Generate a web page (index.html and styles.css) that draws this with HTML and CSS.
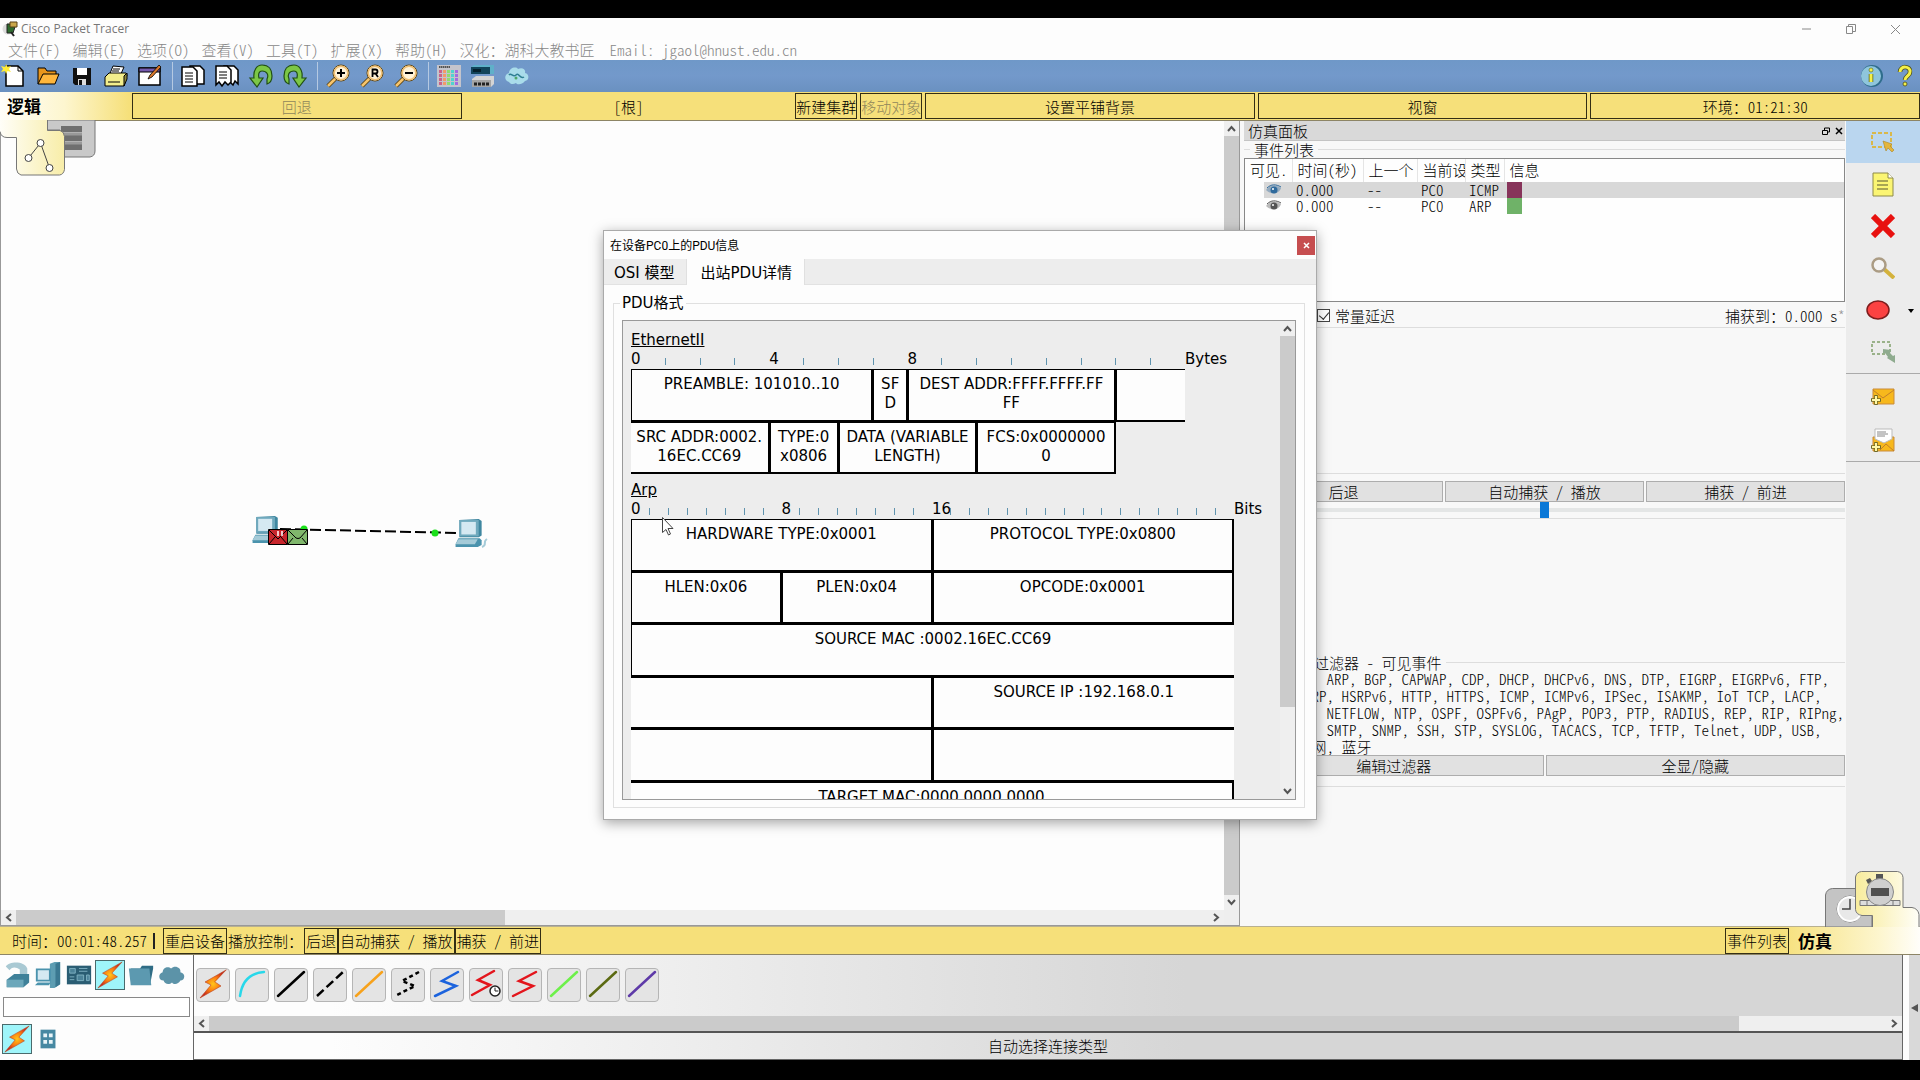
FILE: index.html
```html
<!DOCTYPE html>
<html lang="zh-CN">
<head>
    <meta charset="UTF-8">
    <title>Cisco Packet Tracer</title>
    <link rel="stylesheet" href="styles.css">
</head>
<body>
<svg class="defs" width="0" height="0">
    <defs>
        <radialGradient id="fire">
            <stop offset="0" stop-color="#ffc61a"/>
            <stop offset=".5" stop-color="#fb7d10"/>
            <stop offset="1" stop-color="#c8281c"/>
        </radialGradient>
        <linearGradient id="cream">
            <stop offset="0" stop-color="#fffef8"/>
            <stop offset="1" stop-color="#f8eda8"/>
        </linearGradient>
        <linearGradient id="creamBack">
            <stop offset="0" stop-color="#f8ec9c"/>
            <stop offset="1" stop-color="#fffef8"/>
        </linearGradient>
    </defs>
    <symbol id="bolt" viewBox="0 0 30 30">
        <path d="M28 1 7 13l6 3L2 29l21-12-6-4z" fill="url(#fire)" stroke="#b8431c" stroke-width=".6"/>
    </symbol>
    <symbol id="glass" viewBox="0 0 24 24">
        <path d="m2 22 8-8" stroke="#5d4514" stroke-width="4.5"/>
        <path d="m2 22 8-8" stroke="#f7c56c" stroke-width="2.5"/>
        <circle cx="15" cy="9" r="8" fill="#fff3d8" stroke="#5d4514" stroke-width="1"/>
        <circle cx="15" cy="9" r="6.8" fill="none" stroke="#f0bf72" stroke-width="1.5"/>
    </symbol>
    <symbol id="pc" viewBox="0 0 32 30">
        <path d="m4 1 20-1 3 2v15l-3 2H4z" fill="#3f87a0"/>
        <path d="M4 1h20v17H4z" fill="#6fa9bd"/>
        <path d="M6 3h15v13H6z" fill="#d5e9f2"/>
        <path d="M3 20h22l2 2v5l-4 2H0v-3z" fill="#4b93ad"/>
        <path d="m3 21 20 0-3 5H0z" fill="#a5cbd8"/>
    </symbol>
    <symbol id="eye" viewBox="0 0 16 12">
        <path d="M0 6c3-5 9-6 15-2-1 5-9 8-15 2z" fill="currentColor" opacity=".4"/>
        <path d="M1 4c4-4 9-4 14-1" fill="none" stroke="currentColor"/>
        <circle cx="8" cy="6" r="3.5" fill="currentColor"/>
        <circle cx="7" cy="5" r="1" fill="#fff"/>
    </symbol>
</svg>

<div class="app">
    <header class="titlebar">
        <svg width="16" height="16" viewBox="0 0 16 16">
            <circle cx="6" cy="8" r="5.5" fill="#ddd"/>
            <path d="M5 3h9l-3 9H5z" fill="#2f6b2f" stroke="#222"/>
            <path d="M8 1h7v5H8z" fill="#caa64a" stroke="#5a4316"/>
            <path d="m9 11 3 4" stroke="#222" stroke-width="2"/>
        </svg>
        <h1>Cisco Packet Tracer</h1>
        <button class="win" aria-label="最小化"><svg width="10" height="10"><path d="M0 5h9" stroke="#888"/></svg></button>
        <button class="win" aria-label="还原"><svg width="10" height="10" fill="none" stroke="#888"><path d="M.5 2.5h6v7h-6zM2.5 2V.5h7v7H7"/></svg></button>
        <button class="win" aria-label="关闭"><svg width="11" height="11"><path d="m1 1 9 9M10 1l-9 9" stroke="#888"/></svg></button>
    </header>

    <nav class="menu">
        <a href="#">文件(F)</a>
        <a href="#">编辑(E)</a>
        <a href="#">选项(O)</a>
        <a href="#">查看(V)</a>
        <a href="#">工具(T)</a>
        <a href="#">扩展(X)</a>
        <a href="#">帮助(H)</a>
        <a href="#">汉化：湖科大教书匠&nbsp; Email: jgaol@hnust.edu.cn</a>
    </nav>

    <div class="toolbar">
        <button aria-label="新建">
            <svg viewBox="0 0 24 24"><path d="M4 2h12l5 5v15H4z" fill="#fff" stroke="#000" stroke-width="1.5"/><path d="M16 2v5h5" fill="none" stroke="#000"/><path d="m4 0 1.500 3L9 2 7 5l2 3-3.500-1L4 10 3 7-1 8l2-3-2-3 4 1z" fill="#ffee3a"/></svg>
        </button>
        <button aria-label="打开">
            <svg viewBox="0 0 24 24"><path d="M2 20V4h7l2 3h9v3" fill="#e8951c" stroke="#000"/><path d="m2 20 5-10h16l-4 10z" fill="#ffb63c" stroke="#000"/></svg>
        </button>
        <button aria-label="保存">
            <svg viewBox="0 0 24 24"><path d="M3 4h18v17H5l-2-2z" fill="#111"/><path d="M7 4h10v7H7z" fill="#fff"/><path d="M8 15h8v6H8z" fill="#ddd"/><path d="M9 16h3v5H9z" fill="#111"/></svg>
        </button>
        <button aria-label="打印">
            <svg viewBox="0 0 24 24"><path d="m9 2 11 1-4 9H5z" fill="#fff" stroke="#000"/><path d="m1 13 4-4h17l1 2-3 11H1z" fill="#f3ee8c" stroke="#000"/><path d="m20 12 3-3v6l-3 7z" fill="#8f8b3c" stroke="#000"/><path d="M4 18h12M9 5h7M8 7h7" stroke="#000"/></svg>
        </button>
        <button aria-label="活动向导">
            <svg viewBox="0 0 24 24"><path d="M1 4h21v17H1z" fill="#fff" stroke="#000" stroke-width="1.500"/><path d="M1 4h21v4H1z" fill="#7559ad" stroke="#000"/><path d="m10 15 2-4L21 1l2 2-9 10z" fill="#d9772b" stroke="#000" stroke-width=".8"/></svg>
        </button>
        <i class="sep"></i>
        <button aria-label="复制">
            <svg viewBox="0 0 24 24" fill="#fff" stroke="#000" stroke-width="1.500"><path d="M9 2h10l4 4v14H9z"/><path d="M1 3h11l4 4v15H1z"/><path d="M4 9h8M4 12h8M4 15h8M4 18h8" stroke-width="1"/></svg>
        </button>
        <button aria-label="粘贴">
            <svg viewBox="0 0 24 24" fill="#fff" stroke="#000" stroke-width="1.500"><path d="M9 2h10l4 4v14l-3-3-2 4-3-3H9z"/><path d="M1 2h11l4 4v12l-3 3-3-3-3 4-3-4-3 3z"/><path d="M4 8h8M4 11h8M4 14h8" stroke-width="1"/></svg>
        </button>
        <button aria-label="撤销">
            <svg viewBox="0 0 24 24"><path d="M1 14h4C4 6 8 1 13 1c7 0 10 5 10 11 0 4-2 7-5 8v-5c2-4 0-8-5-8-3 0-4 3-3 7h4l-6 9z" fill="#7cc746" stroke="#214f14" stroke-width="1.2"/></svg>
        </button>
        <button aria-label="重做">
            <svg viewBox="0 0 24 24"><path d="M23 14h-4C20 6 16 1 11 1 4 1 1 6 1 12c0 4 2 7 5 8v-5c-2-4 0-8 5-8 3 0 4 3 3 7h-4l6 9z" fill="#7cc746" stroke="#214f14" stroke-width="1.2"/></svg>
        </button>
        <i class="sep"></i>
        <button aria-label="放大">
            <svg viewBox="0 0 24 24"><use href="#glass"/><path d="M11 9h8M15 5v8" stroke="#000" stroke-width="2"/></svg>
        </button>
        <button aria-label="重置缩放">
            <svg viewBox="0 0 24 24"><use href="#glass"/><path d="M12.500 13V5.500h3a2 2 0 0 1 0 4h-3m3 0 2.500 3.500" fill="none" stroke="#000" stroke-width="1.800"/></svg>
        </button>
        <button aria-label="缩小">
            <svg viewBox="0 0 24 24"><use href="#glass"/><path d="M11 9h8" stroke="#000" stroke-width="2"/></svg>
        </button>
        <i class="sep"></i>
        <button aria-label="调色板">
            <svg viewBox="0 0 24 24"><path d="M0 1h24v22H0z" fill="#c4c4cc"/><path d="M2 3h11" stroke="#555" stroke-width="2" stroke-dasharray="1.500 .5"/><g stroke-width="3" stroke-dasharray="3 1" fill="none"><path d="M3.500 6v15" stroke="#c9628a"/><path d="M7.500 6v15" stroke="#f29a6b"/><path d="M11.500 6v15" stroke="#8fdc6e"/><path d="M15.500 6v15" stroke="#4fd4cf"/><path d="M19.500 6v15" stroke="#a36be0"/></g></svg>
        </button>
        <button aria-label="自定义设备">
            <svg viewBox="0 0 24 24"><path d="m0 3 3-2h20v9H0z" fill="#5fb0c9"/><path d="M0 3h19v7H0z" fill="#12445a"/><path d="M2 5h8v3H2z" fill="#05202c"/><path d="m1 15 4-3h18v8l-3 3H1z" fill="#d4d4d4"/><path d="M1 16h19v7H1z" fill="#a5a5a5"/><path d="M3 20h16" stroke="#222" stroke-width="3" stroke-dasharray="3 1"/></svg>
        </button>
        <button aria-label="云">
            <svg viewBox="0 0 24 24"><path d="M4 18c-5-1-5-8 0-9 0-5 7-7 9-4 4-2 8 0 7 4 5 1 4 8 0 8-3 4-8 4-9 2-3 2-6 1-7-1z" fill="#a9dcea"/><path d="M4 11c2-3 4 3 7 0s4 5 8 2" fill="none" stroke="#2f7f93" stroke-width="1.500"/><circle cx="11" cy="14" r="1.500" fill="#4ea86a"/></svg>
        </button>
        <span class="grow"></span>
        <button aria-label="信息">
            <svg viewBox="0 0 24 24"><circle cx="13" cy="12" r="11" fill="#2f6d8c"/><circle cx="12" cy="12" r="10" fill="#8fc6dc"/><path d="M12 10v8" stroke="#54611b" stroke-width="4.500"/><path d="M12 10v8" stroke="#f4f04a" stroke-width="3"/><circle cx="12" cy="6" r="2" fill="#f4f04a" stroke="#54611b" stroke-width=".6"/></svg>
        </button>
        <button aria-label="帮助">
            <svg viewBox="0 0 24 24" fill="none"><path d="M7 8c0-7 11-6 10 0 0 4-5 4-5 8" stroke="#4c4c14" stroke-width="4.500"/><path d="M7 8c0-7 11-6 10 0 0 4-5 4-5 8" stroke="#f4f04a" stroke-width="3"/><circle cx="12" cy="20" r="2" fill="#f4f04a" stroke="#4c4c14" stroke-width=".8"/></svg>
        </button>
    </div>

    <div class="viewbar">
        <strong class="mode">逻辑</strong>
        <button class="wide" disabled>回退</button>
        <span class="root">[根]</span>
        <button>新建集群</button>
        <button disabled>移动对象</button>
        <button class="wide">设置平铺背景</button>
        <button class="wide">视窗</button>
        <button class="wide">环境：01:21:30</button>
    </div>

    <main class="main">
        <section class="workspace">
            <div class="canvas">
                <svg class="corner" width="96" height="57" viewBox="0 0 96 57">
                    <path d="M47 0h48v31q0 5-5 6H60V10H47z" fill="#c9c9c9" stroke="#777"/>
                    <path d="M61 9h21M61 18h21M61 27h21" stroke="#6f6f6f" stroke-width="6"/>
                    <path d="M61 14h21M61 23h21" stroke="#999" stroke-width="3"/>
                    <path d="M0 0h47v10.500h13q4 1 4.500 6v33q-1 5-5 5.500H21q-4-1-4.500-6V17.500H7q-6 0-7-6z" fill="url(#cream)"/>
                    <path d="M47.500 0v10.500H60q4 1 4.500 6v33q-1 5-5 5.500H21q-4-1-4.500-6V17.500H7q-6 0-7-6" fill="none" stroke="#777"/>
                    <path d="M28.500 38 40.500 23l9 25" fill="none" stroke="#444"/>
                    <g fill="#fff" stroke="#444"><circle cx="40.500" cy="23" r="3.500"/><circle cx="28.500" cy="38" r="3.500"/><circle cx="49.500" cy="48" r="3.500"/></g>
                </svg>
                <svg class="topology" width="240" height="40" viewBox="0 0 240 40">
                    <path d="M28 13 208 17" stroke="#000" stroke-width="2" stroke-dasharray="11 4"/>
                    <circle cx="52" cy="13" r="3.500" fill="#1be01b"/>
                    <circle cx="183" cy="17" r="3.500" fill="#1be01b"/>
                    <use href="#pc" width="31" height="28"/>
                    <use href="#pc" x="203" y="3" width="32" height="29"/>
                    <path d="M230 31c6-2 0-5 5-8" fill="none" stroke="#a5cbd8" stroke-width="2"/>
                    <path d="M16.500 13.500h19v15h-19z" fill="#c8262c" stroke="#000"/>
                    <path d="m17 14 9 9 9-9M17 28l6-7M35 28l-6-7" fill="none" stroke="#000"/>
                    <path d="M26 15v5M30 15v5" stroke="#fff" stroke-width="1.500"/>
                    <path d="M35.500 13.500h20v15h-20z" fill="#80b76c" stroke="#000"/>
                    <path d="m36 14 8 8q2 1 4 0l7-8M36 28l5-6M55 28l-5-6" fill="none" stroke="#000"/>
                </svg>
            </div>
            <div class="vbar">
                <button aria-label="向上"><svg width="9" height="7"><path d="m1 6 3.500-4L8 6" fill="none" stroke="#555" stroke-width="2"/></svg></button>
                <span class="thumb"></span>
                <button aria-label="向下"><svg width="9" height="7"><path d="m1 1 3.500 4L8 1" fill="none" stroke="#555" stroke-width="2"/></svg></button>
            </div>
            <div class="hbar">
                <button aria-label="向左"><svg width="7" height="9"><path d="M6 1 2 4.500 6 8" fill="none" stroke="#555" stroke-width="2"/></svg></button>
                <span class="thumb"></span>
                <button aria-label="向右"><svg width="7" height="9"><path d="m1 1 4 3.500L1 8" fill="none" stroke="#555" stroke-width="2"/></svg></button>
            </div>
        </section>

        <aside class="simulation">
            <div class="dock-title">
                <h2>仿真面板</h2>
                <button aria-label="浮动"><svg width="8" height="8" fill="none" stroke="#000"><path d="M.5 3.500h5v4h-5zM2.500 3V1h5v4H6"/></svg></button>
                <button aria-label="关闭面板"><svg width="8" height="8"><path d="m1 1 6 6M7 1 1 7" stroke="#000" stroke-width="1.500"/></svg></button>
            </div>
            <div class="legend">事件列表</div>
            <div class="events">
                <table>
                    <thead>
                    <tr><th class="c-eye">可见.</th><th class="c-time">时间(秒)</th><th class="c-last">上一个</th><th class="c-at">当前设</th><th class="c-type">类型</th><th>信息</th></tr>
                    </thead>
                    <tbody>
                    <tr class="selected"><td><svg class="blue" width="16" height="12"><use href="#eye"/></svg></td><td>0.000</td><td>--</td><td>PC0</td><td>ICMP</td><td><i class="icmp"></i></td></tr>
                    <tr><td><svg width="16" height="12"><use href="#eye"/></svg></td><td>0.000</td><td>--</td><td>PC0</td><td>ARP</td><td><i class="arp"></i></td></tr>
                    </tbody>
                </table>
            </div>
            <div class="delay">
                <label><input type="checkbox" checked>常量延迟</label>
                <span>捕获到：0.000 s<em>*</em></span>
            </div>
            <div class="blank"></div>
            <div class="buttons">
                <button>后退</button>
                <button>自动捕获 / 播放</button>
                <button>捕获 / 前进</button>
            </div>
            <input class="speed" type="range" min="0" max="100" value="50" aria-label="播放速度">
            <div class="legend filter">事件列表过滤器 - 可见事件</div>
            <p class="protocols">ACL过滤器, ARP, BGP, CAPWAP, CDP, DHCP, DHCPv6, DNS, DTP, EIGRP, EIGRPv6, FTP,<br>
                H.323, HSRP, HSRPv6, HTTP, HTTPS, ICMP, ICMPv6, IPSec, ISAKMP, IoT TCP, LACP,<br>
                LLDP, NDP, NETFLOW, NTP, OSPF, OSPFv6, PAgP, POP3, PTP, RADIUS, REP, RIP, RIPng,<br>
                RTP, SCCP, SMTP, SNMP, SSH, STP, SYSLOG, TACACS, TCP, TFTP, Telnet, UDP, USB,<br>
                VTP, 物联网, 蓝牙</p>
            <div class="buttons last">
                <button>编辑过滤器</button>
                <button>全显/隐藏</button>
            </div>
        </aside>

        <div class="tools">
            <button class="on" aria-label="选择"><svg width="26" height="24"><path d="M2 3h19v14H2z" fill="none" stroke="#d9b84a" stroke-width="2" stroke-dasharray="4 2"/><path d="m13 11 9 3-2 2 4 4-2 2-4-4-2 3z" fill="#e3b53c" stroke="#a8862c" stroke-width=".6"/></svg></button>
            <button aria-label="备注"><svg width="22" height="25"><path d="M1 1h15l5 5v18H1z" fill="#fbf573" stroke="#8d8a4a"/><path d="M16 1v5h5" fill="#fff" stroke="#8d8a4a"/><path d="M5 9h11M5 13h11M5 17h11" stroke="#8d8a4a" stroke-width="1.500"/></svg></button>
            <button aria-label="删除"><svg width="24" height="24"><path d="m2 2 20 20M22 2 2 22" stroke="#e8110f" stroke-width="6"/></svg></button>
            <button aria-label="检查"><svg width="24" height="22"><path d="m13 12 10 9" stroke="#d4b23c" stroke-width="4"/><circle cx="8" cy="8" r="6.500" fill="#f4f4f4" stroke="#ab9c84" stroke-width="2.500"/></svg></button>
            <button class="drop" aria-label="绘图"><svg width="48" height="20"><ellipse cx="12" cy="10" rx="11" ry="9" fill="#fb4242" stroke="#7d1c1c" stroke-width="1.500"/><path d="M42 9h6l-3 4z" fill="#000"/></svg></button>
            <button class="end" aria-label="调整大小"><svg width="26" height="24"><path d="M2 2h18v12H2z" fill="none" stroke="#7f9f6a" stroke-width="1.500" stroke-dasharray="3 2"/><path d="m13 9 8 1-1 3 3 3 2-1v8l-8-5 1-1-3-4-2 1z" fill="#8fab8f"/></svg></button>
            <button class="pdu-tool" aria-label="简单PDU"><svg width="24" height="18"><path d="M2 1h21v15H2z" fill="#f7b81c" stroke="#c98b3a"/><path d="m2 2 10 8L23 2" fill="none" stroke="#c27f2a"/><path d="M5 7v10M0 12h10" stroke="#6e6a2a" stroke-width="3.500"/><path d="M5 8v8M1 12h8" stroke="#fff7a8" stroke-width="2"/></svg></button>
            <button class="pdu-tool end" aria-label="复杂PDU"><svg width="24" height="25"><path d="M2 9h21v14H2z" fill="#f7b81c" stroke="#c98b3a"/><path d="M4 1h17v10l-8 4-9-4z" fill="#fff" stroke="#bbb"/><path d="M6 4h9M6 6h11M6 8h8" stroke="#888"/><path d="m9 22 6-6 8 7" fill="none" stroke="#c27f2a"/><path d="M5 14v10M0 19h10" stroke="#6e6a2a" stroke-width="3.500"/><path d="M5 15v8M1 19h8" stroke="#fff7a8" stroke-width="2"/></svg></button>
        </div>

        <svg class="sim-tabs" width="96" height="56" viewBox="0 0 96 56">
            <path d="M1.500 56V24q1-6 7-6.500H48V56z" fill="#c4c4c4" stroke="#777"/>
            <circle cx="26" cy="38" r="13" fill="#e8e8e8" stroke="#777"/>
            <circle cx="26" cy="38" r="12" fill="none" stroke="#fff" stroke-width="2"/>
            <path d="M26 28v10h-8" fill="none" stroke="#444" stroke-width="1.500"/>
            <path d="M48 56V44H38q-6-1-6.500-6V6q1-5 6-5.500h36q5 1 5.500 6V36.500h9q6 1 7.500 7V56z" fill="url(#creamBack)"/>
            <path d="M48.500 56V44.500H38q-6-1-6.500-6V6q1-5 6-5.500h36q5 1 5.500 6V36.500h9q6 1 7 7V56" fill="none" stroke="#777"/>
            <path d="M36 29.500h40v5H36zM43 29v6M69 29v6" fill="#ddd" stroke="#777"/>
            <path d="M52 3h7v5h-7zM42 9l4-2 2 3-4 3z" fill="#555"/>
            <circle cx="56" cy="21" r="13.500" fill="#cfcfcf" stroke="#888"/>
            <path d="M47 17h18v8H47z" fill="#505050"/>
        </svg>
    </main>

    <div class="playbar">
        <span class="clock">时间：00:01:48.257</span>
        <i class="bar"></i>
        <button>重启设备</button>
        <span class="control">播放控制：</span>
        <button>后退</button>
        <button>自动捕获 / 播放</button>
        <button>捕获 / 前进</button>
        <span class="grow"></span>
        <button>事件列表</button>
        <strong class="mode">仿真</strong>
    </div>

    <footer class="bottom">
        <div class="devices">
            <div class="row">
                <button aria-label="网络设备"><svg viewBox="0 0 30 30"><path d="M3 6c4-6 20-6 23 2v8l-8 4V9c-4-3-9-3-11 1z" fill="#a9c9d3"/><path d="m4 20 8-6h16v9l-6 5H4z" fill="#3f8199"/><path d="M4 20h18v8H4z" fill="#6ba7ba"/></svg></button>
                <button aria-label="终端设备"><svg viewBox="0 0 30 30"><path d="m17 3 5-2h6v24l-6 4h-5z" fill="#5d9db2"/><path d="m23 3 5-2v24l-5 3z" fill="#3a7891"/><path d="M3 9h14v12H3z" fill="#d5e9f2" stroke="#4b93ad" stroke-width="2"/><path d="m1 26 3-3h14l-2 3z" fill="#4b93ad"/></svg></button>
                <button aria-label="组件"><svg viewBox="0 0 30 30"><path d="M2 5h26v20H2z" fill="#2a5d73"/><path d="M5 8h6v5H5zM15 8h9M15 11h9M5 17h5M5 20h5M13 15h7v6h-7zM23 15h3v6h-3z" fill="#4c8399" stroke="#7fb1c2"/></svg></button>
                <button class="on" aria-label="连接"><svg viewBox="0 0 30 30"><use href="#bolt"/></svg></button>
                <button aria-label="杂项"><svg viewBox="0 0 30 30"><path d="M4 8h10l2-3h12v3l-3 16H6z" fill="#2f6c85"/><path d="M2 8h22l2 18H4z" fill="#5c99b0"/></svg></button>
                <button aria-label="多用户连接"><svg viewBox="0 0 30 30"><path d="M6 21c-6 0-6-8-1-9 0-5 6-7 9-4 4-4 11-1 10 4 6 1 5 9 0 9-2 4-7 5-9 2-3 3-8 2-9-2z" fill="#5c93a8"/></svg></button>
            </div>
            <input class="search" type="text" aria-label="搜索设备">
            <div class="row">
                <button class="on" aria-label="连接类型"><svg viewBox="0 0 30 30"><use href="#bolt"/></svg></button>
                <button aria-label="结构化布线"><svg viewBox="0 0 30 30"><path d="M7 5h16v20H7z" fill="#4688a2"/><path d="M10 9h4v4h-4zM16 9h4v4h-4zM10 16h4v4h-4zM16 16h4v4h-4z" fill="#e8f4f8"/></svg></button>
            </div>
        </div>
        <div class="cables">
            <div class="shelf">
                <button aria-label="自动选择"><svg viewBox="0 0 34 34"><use href="#bolt" x="2" y="1" width="30" height="30"/></svg></button>
                <button aria-label="控制台线"><svg viewBox="0 0 34 34"><path d="M5 28C7 13 15 5 29 4" stroke="#28d8ea"/></svg></button>
                <button aria-label="直通线"><svg viewBox="0 0 34 34"><path d="M4 28 30 4" stroke="#000"/></svg></button>
                <button aria-label="交叉线"><svg viewBox="0 0 34 34"><path d="M4 28 30 4" stroke="#000" stroke-dasharray="9 4"/></svg></button>
                <button aria-label="光纤"><svg viewBox="0 0 34 34"><path d="M4 28 30 4" stroke="#f7a21c"/></svg></button>
                <button aria-label="电话线"><svg viewBox="0 0 34 34"><path d="m28 4-17 9 13 5L4 28" stroke="#000" stroke-dasharray="4 3"/></svg></button>
                <button aria-label="同轴电缆"><svg viewBox="0 0 34 34"><path d="m28 4-16 9 14 5L5 28" stroke="#1c63dd"/></svg></button>
                <button aria-label="串行DCE"><svg viewBox="0 0 34 34"><path d="M25 3 9 12l12 5L3 27" stroke="#e3151c"/><circle cx="26" cy="23" r="5" fill="#fff" stroke="#222" stroke-width="1.500"/><path d="M26 20v3h3" stroke="#222" stroke-width="1"/></svg></button>
                <button aria-label="串行DTE"><svg viewBox="0 0 34 34"><path d="m28 4-17 9 14 5L5 28" stroke="#e3151c"/></svg></button>
                <button aria-label="八爪线"><svg viewBox="0 0 34 34"><path d="M4 28 30 4" stroke="#6df04a"/></svg></button>
                <button aria-label="物联网线缆"><svg viewBox="0 0 34 34"><path d="M4 28 30 4" stroke="#5b6a12"/></svg></button>
                <button aria-label="USB线"><svg viewBox="0 0 34 34"><path d="M4 28 30 4" stroke="#5e3aa8"/></svg></button>
            </div>
            <div class="hbar">
                <button aria-label="向左"><svg width="7" height="9"><path d="M6 1 2 4.500 6 8" fill="none" stroke="#555" stroke-width="2"/></svg></button>
                <span class="thumb"></span>
                <button aria-label="向右"><svg width="7" height="9"><path d="m1 1 4 3.500L1 8" fill="none" stroke="#555" stroke-width="2"/></svg></button>
            </div>
            <div class="status">自动选择连接类型</div>
        </div>
        <button class="expand" aria-label="展开"><svg width="7" height="8"><path d="M7 0v8L0 4z" fill="#555"/></svg></button>
    </footer>
</div>

<!-- PDU 信息窗口 -->
<div class="dialog">
    <div class="caption">
        <h2>在设备PC0上的PDU信息</h2>
        <button class="close" aria-label="关闭"><svg width="7" height="7"><path d="m1 1 5 5M6 1 1 6" stroke="#fff" stroke-width="1.500"/></svg></button>
    </div>
    <div class="tabs">
        <button>OSI 模型</button>
        <button class="active">出站PDU详情</button>
    </div>
    <fieldset>
        <legend>PDU格式</legend>
        <div class="scroll">
            <div class="pdu">
                <h3>EthernetII</h3>
                <div class="ruler bytes">
                    <span>0</span><i></i><i></i><i></i><span>4</span><i></i><i></i><i></i><span>8</span><i></i><i></i><i></i><i></i><i></i><i></i><i></i><b>Bytes</b>
                </div>
                <div class="packet ethernet">
                    <div class="w7">PREAMBLE: 101010..10</div>
                    <div class="w1">SF<br>D</div>
                    <div class="w6">DEST ADDR:FFFF.FFFF.FF<br>FF</div>
                    <div class="w2 open"></div>
                    <div class="w4 cont">SRC ADDR:0002.<br>16EC.CC69</div>
                    <div class="w2">TYPE:0<br>x0806</div>
                    <div class="w4">DATA (VARIABLE<br>LENGTH)</div>
                    <div class="w4">FCS:0x0000000<br>0</div>
                </div>
                <h3>Arp</h3>
                <div class="ruler bits">
                    <span>0</span><i></i><i></i><i></i><i></i><i></i><i></i><i></i><span>8</span><i></i><i></i><i></i><i></i><i></i><i></i><i></i><span>16</span><i></i><i></i><i></i><i></i><i></i><i></i><i></i><i></i><i></i><i></i><i></i><i></i><i></i><i></i><i></i><b>Bits</b>
                </div>
                <div class="packet arp-header">
                    <div class="w16">HARDWARE TYPE:0x0001</div>
                    <div class="w16">PROTOCOL TYPE:0x0800</div>
                    <div class="w8">HLEN:0x06</div>
                    <div class="w8">PLEN:0x04</div>
                    <div class="w16">OPCODE:0x0001</div>
                    <div class="w32 open">SOURCE MAC :0002.16EC.CC69</div>
                    <div class="w16 cont"></div>
                    <div class="w16 open">SOURCE IP :192.168.0.1</div>
                    <div class="w16 cont"></div>
                    <div class="w16 open"></div>
                    <div class="w32 cont">TARGET MAC:0000.0000.0000</div>
                </div>
            </div>
            <div class="vbar">
                <button aria-label="向上"><svg width="9" height="7"><path d="m1 6 3.500-4L8 6" fill="none" stroke="#555" stroke-width="2"/></svg></button>
                <span class="thumb"></span>
                <button aria-label="向下"><svg width="9" height="7"><path d="m1 1 3.500 4L8 1" fill="none" stroke="#555" stroke-width="2"/></svg></button>
            </div>
        </div>
    </fieldset>
    <svg class="cursor" width="12" height="19"><path d="M.5.500v15l3.500-3 2.500 5.500 2-1L6 11.500h5z" fill="#fff" stroke="#444"/></svg>
</div>
</body>
</html>
```

FILE: styles.css
```css
*{
    box-sizing: border-box;
    margin: 0;
    padding: 0;
}
body{
    position: relative;
    min-height: 100vh;
    padding: 18px 0 20px;
    background: #000;
    color: #000;
    font: 300 15px/17px "Noto Sans CJK SC", sans-serif;
    font-feature-settings: "hwid";
    overflow: hidden;
}
button,input{
    font: inherit;
    font-feature-settings: inherit;
    color: inherit;
}
button{
    border: none;
    background: none;
    display: flex;
    align-items: center;
    justify-content: center;
    white-space: nowrap;
}
a{
    color: inherit;
    text-decoration: none;
}
svg{
    display: block;
    flex: none;
}
.defs{
    position: absolute;
}
.grow{
    flex: 1;
}
.app{
    display: flex;
    flex-direction: column;
    height: calc(100vh - 38px);
    min-width: 1400px;
    background: #fdfdfd;
}

/* 标题栏和菜单 */
.titlebar{
    display: flex;
    align-items: center;
    height: 22px;
    padding: 0 3px 0 2px;
    color: #777;
}
.titlebar h1{
    flex: 1;
    margin-left: 3px;
    font: 12px/22px "Open Sans", sans-serif;
}
.titlebar .win{
    width: 44px;
    height: 22px;
}
.menu{
    display: flex;
    align-items: center;
    gap: 12px;
    height: 20px;
    padding: 0 0 2px 8px;
    color: #888;
}

/* 工具栏 */
.toolbar{
    display: flex;
    align-items: center;
    height: 32px;
    padding-left: 2px;
    background: linear-gradient(#6f98c8, #7399cb 50%, #6a91c0);
}
.toolbar button{
    width: 24px;
    height: 24px;
    margin-right: 10px;
}
.toolbar button:last-child{
    margin-right: 3px;
}
.toolbar svg{
    width: 24px;
    height: 24px;
    overflow: visible;
}
.toolbar .sep{
    width: 1px;
    height: 28px;
    margin-right: 8px;
    background: #b5c9e2;
}

/* 黄色导航条 */
.viewbar,.playbar{
    display: flex;
    align-items: center;
    background: #f6e07a;
    border-bottom: 1px solid #8d8566;
}
.viewbar{
    gap: 3px;
    height: 29px;
}
.viewbar button,.playbar button{
    height: 26px;
    border: 1px solid #332e14;
}
.playbar button{
    padding: 0 1px;
}
.viewbar button:disabled{
    color: #8f865a;
}
.viewbar .wide,.viewbar .root{
    flex: 1 1 0;
    text-align: center;
}
.viewbar .mode{
    width: 129px;
    height: 28px;
    padding-left: 7px;
    line-height: 28px;
    background: linear-gradient(90deg, #fffefa, #fdf6cf 50%, #f6e07a);
}
.mode{
    font-size: 17px;
    font-weight: 700;
}

/* 主区域 */
.main{
    position: relative;
    display: flex;
    flex: 1;
    min-height: 0;
}
.workspace{
    display: grid;
    grid-template: 1fr 15px / 1fr 15px;
    flex: 1;
    border: 1px solid #999;
    border-top: none;
    background: #eee;
}
.canvas{
    position: relative;
    background: #fdfdfd;
}
.corner{
    position: absolute;
    left: -1px;
    top: -1px;
}
.topology{
    position: absolute;
    left: 251px;
    top: 395px;
}
.hbar,.vbar{
    display: flex;
    background: #efefef;
}
.vbar{
    flex-direction: column;
    justify-content: space-between;
}
.hbar{
    justify-content: space-between;
}
.hbar button,.vbar button{
    width: 15px;
    height: 15px;
}
.thumb{
    background: #cbcbcb;
}
.workspace .vbar .thumb{
    flex: 1;
}
.workspace .hbar .thumb{
    width: 40%;
    margin-right: auto;
}

/* 仿真面板 */
.simulation{
    width: 606px;
    padding-left: 4px;
    padding-right: 1px;
    background: #f8f8f8;
}
.dock-title{
    display: flex;
    align-items: center;
    height: 20px;
    padding-left: 4px;
    background: #d9d9d9;
    border-bottom: 1px solid #c4c4c4;
}
.dock-title h2{
    flex: 1;
    font: inherit;
}
.dock-title button{
    width: 13px;
    height: 13px;
}
.legend{
    display: flex;
    align-items: center;
    gap: 4px;
    height: 16px;
}
.legend::before,.legend::after{
    content: "";
    width: 6px;
    height: 1px;
    background: #ddd;
}
.legend::after{
    flex: 1;
}
.events{
    height: 144px;
    margin-top: 1px;
    border: 1px solid #888;
    background: #fefefe;
}
.events table{
    width: 100%;
    border-collapse: collapse;
    table-layout: fixed;
}
.events th{
    height: 23px;
    padding: 0 0 2px 5px;
    border-right: 1px solid #e5e5e5;
    font-weight: inherit;
    text-align: left;
    white-space: nowrap;
    overflow: hidden;
}
.events th:last-child{
    border-right: none;
}
.events td{
    height: 16px;
    padding-left: 4px;
    line-height: 16px;
}
.events td:first-child{
    padding-left: 21px;
}
.events .c-eye{width: 47px;}
.events .c-time{width: 71px;}
.events .c-last{width: 54px;}
.events .c-at{width: 48px;}
.events .c-type{width: 39px;}
.events td svg{
    color: #555;
}
.events td svg.blue{
    color: #2f6a9c;
}
.events .selected{
    background: linear-gradient(90deg, transparent 19px, #d8d8d8 19px);
}
.events i{
    display: block;
    width: 15px;
    height: 16px;
    margin-left: -1px;
}
.icmp{background: #87345a;}
.arp{background: #6fb268;}
.delay{
    display: flex;
    align-items: center;
    justify-content: space-between;
    height: 26px;
    padding: 2px 0 0 73px;
    border-bottom: 1px solid #ddd;
}
.delay label{
    display: flex;
    align-items: center;
    gap: 5px;
}
.delay input{
    width: 13px;
    height: 13px;
    appearance: none;
    border: 1px solid #444;
    background: #fff;
    position: relative;
}
.delay input:checked::after{
    content: "";
    position: absolute;
    left: 3px;
    top: 0;
    width: 5px;
    height: 8px;
    border: solid #333;
    border-width: 0 1px 1px 0;
    transform: rotate(40deg);
}
.delay em{
    font-style: normal;
    color: #999;
}
.blank{
    height: 146px;
    border-bottom: 1px solid #ddd;
}
.buttons{
    display: flex;
    gap: 2px;
    margin-top: 7px;
}
.buttons button{
    flex: 1 1 0;
    height: 21px;
    border: 1px solid #adadad;
    background: #e1e1e1;
}
.speed{
    display: block;
    width: 100%;
    height: 17px;
    appearance: none;
    background: linear-gradient(transparent 6px, #e4e6e6 6px, #e4e6e6 10px, transparent 10px);
    border-bottom: 1px solid #ddd;
}
.speed::-webkit-slider-thumb{
    appearance: none;
    width: 9px;
    height: 16px;
    background: #0a78d7;
}
.filter{
    margin-top: 135px;
}
.protocols{
    height: 85px;
    white-space: nowrap;
}
.buttons.last{
    margin-top: 0;
    padding-bottom: 10px;
    border-bottom: 1px solid #ddd;
}

/* 右侧工具 */
.tools{
    width: 74px;
    background: #ececec;
}
.tools button{
    width: 74px;
    height: 42px;
}
.tools .on{
    background: #bad6ef;
}
.tools .drop{
    padding-left: 14px;
}
.tools .end{
    height: 43px;
    border-bottom: 1px solid #aaa;
}
.tools .pdu-tool{
    height: 44px;
    padding-top: 2px;
}
.sim-tabs{
    position: absolute;
    right: 0;
    bottom: -1px;
}

/* 播放条 */
.playbar{
    height: 29px;
    padding-left: 12px;
    border-top: 1px solid #b8b090;
    background: linear-gradient(270deg, #fffefa, #fdf6cf 40px, #f6e07a 140px);
}
.playbar .bar{
    width: 2px;
    height: 16px;
    margin: 0 8px 0 6px;
    background: #222;
}
.playbar .control{
    padding: 0 1px;
}
.playbar .mode{
    width: 131px;
    padding-left: 9px;
}

/* 设备区 */
.bottom{
    display: flex;
    height: 105px;
}
.devices{
    width: 193px;
    padding: 5px 3px;
}
.devices .row{
    display: flex;
    gap: 1px;
    margin-left: -1px;
}
.devices .row button{
    width: 30px;
    height: 30px;
}
.devices .row svg{
    width: 28px;
    height: 28px;
}
.devices .on{
    background: #9ff5fa;
    border: 1px solid #4a6a6c;
}
.search{
    display: block;
    width: 100%;
    height: 20px;
    margin: 7px 0;
    border: 1px solid #888;
    background: #fff;
}
.cables{
    display: flex;
    flex-direction: column;
    flex: 1;
    border: solid #666;
    border-width: 0 1px 1px;
    background: linear-gradient(90deg, #fdfdfd 8%, #eee 28%, #d6d6d6 58%);
}
.shelf{
    display: flex;
    gap: 5px;
    flex: 1;
    padding: 13px 2px;
}
.shelf button{
    width: 34px;
    height: 34px;
    border: 1px solid #b5b5b5;
    border-radius: 4px;
    background: #e4e4e4;
}
.shelf svg{
    width: 34px;
    height: 34px;
    fill: none;
    stroke-width: 2.5;
    stroke-linecap: round;
}
.shelf path[stroke-dasharray]{
    stroke-linecap: butt;
}
.cables .hbar .thumb{
    flex: 1;
    margin-right: 148px;
}
.status{
    height: 28px;
    border-top: 2px solid #555;
    line-height: 26px;
    text-align: center;
}
.expand{
    width: 17px;
    border-left: 6px solid #fdfdfd;
    background: #d9d9d9;
}

/* PDU 窗口 */
.dialog{
    position: absolute;
    left: 603px;
    top: 230px;
    width: 714px;
    padding-bottom: 11px;
    border: 1px solid #aaa;
    background: #fdfdfd;
    box-shadow: 0 3px 12px rgba(0,0,0,.35);
    font: 15px/19px "DejaVu Sans", "Noto Sans CJK SC", sans-serif;
    font-feature-settings: normal;
}
.caption{
    display: flex;
    align-items: center;
    height: 28px;
    padding: 1px 1px 0 6px;
}
.caption h2{
    flex: 1;
    font: 12px/28px Roboto, "Noto Sans CJK SC", sans-serif;
}
.caption .close{
    width: 18px;
    height: 19px;
    background: #c64e50;
}
.tabs{
    display: flex;
    height: 26px;
    background: #ededed;
    border-bottom: 1px solid #e2e2e2;
}
.tabs button{
    height: 26px;
    padding: 2px 11px 0 10px;
    border-right: 1px solid #e0e0e0;
}
.tabs .active{
    padding: 2px 12px 0 14px;
    background: #fdfdfd;
}
.dialog fieldset{
    margin: 9px 11px 0 9px;
    padding: 7px 8px;
    border: 1px solid #e0e0e0;
}
.dialog legend{
    margin-left: -2px;
    padding: 0 2px;
}
.scroll{
    display: flex;
    height: 480px;
    border: 1px solid #999;
    background: #ededed;
    overflow: hidden;
}
.pdu{
    flex: 1;
    padding: 10px 0 0 8px;
}
.pdu h3{
    font-size: 15px;
    font-weight: normal;
    text-decoration: underline;
}
.ruler{
    display: flex;
    height: 19px;
}
.ruler span,.ruler i{
    flex: 1 1 0;
    min-width: 0;
}
.ruler i{
    height: 7px;
    margin-top: 8px;
    border-left: 1px solid #5f93ae;
}
.ruler b{
    width: 0;
    font-weight: normal;
}
.bytes,.ethernet{
    width: 554px;
    grid-template-columns: repeat(16, minmax(0, 1fr));
}
.bits,.arp-header{
    width: 603px;
    grid-template-columns: repeat(32, minmax(0, 1fr));
}
.packet{
    display: grid;
    grid-auto-rows: 1fr;
}
.packet div{
    padding-top: 5px;
    border: solid #000;
    border-width: 1px 2px 2px 1px;
    background: #fdfdfd;
    text-align: center;
    white-space: nowrap;
}
.packet .cont{
    border-left-width: 0;
}
.packet .open{
    border-right-width: 0;
}
.ethernet{
    height: 105px;
    margin-bottom: 7px;
}
.arp-header{
    height: 315px;
}
.w1{grid-column: span 1;}
.w2{grid-column: span 2;}
.w4{grid-column: span 4;}
.w6{grid-column: span 6;}
.w7{grid-column: span 7;}
.w8{grid-column: span 8;}
.w16{grid-column: span 16;}
.w32{grid-column: span 32;}
.scroll .vbar .thumb{
    height: 371px;
    margin-bottom: auto;
}
.cursor{
    position: absolute;
    left: 58px;
    top: 286px;
}
```
